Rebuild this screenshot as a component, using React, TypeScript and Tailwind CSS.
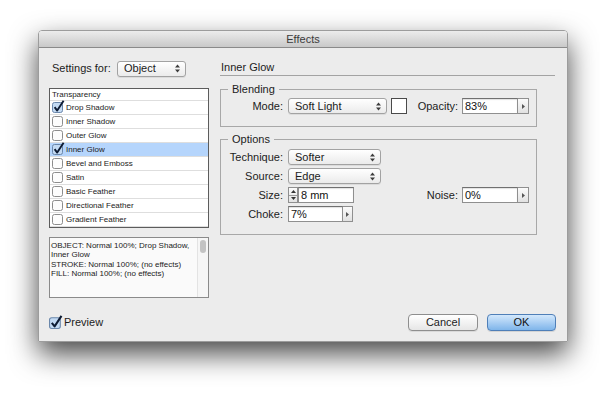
import React from "react";

const effects = [
  { name: "Drop Shadow", checked: true },
  { name: "Inner Shadow", checked: false },
  { name: "Outer Glow", checked: false },
  { name: "Inner Glow", checked: true, selected: true },
  { name: "Bevel and Emboss", checked: false },
  { name: "Satin", checked: false },
  { name: "Basic Feather", checked: false },
  { name: "Directional Feather", checked: false },
  { name: "Gradient Feather", checked: false },
];

function CheckBox({ checked, size = 13 }: { checked: boolean; size?: number }) {
  return (
    <svg width={size} height={size} viewBox="0 0 13 13" className="shrink-0 overflow-visible">
      <rect
        x="0.5"
        y="2.5"
        width="10"
        height="10"
        rx="2"
        fill={checked ? "#c3daf3" : "#fdfdfd"}
        stroke={checked ? "#6a87ab" : "#8d8d8d"}
      />
      {checked && (
        <path d="M2.6 7.2 L5.2 10.6 L11.6 0.8" fill="none" stroke="#0d1b33" strokeWidth="1.9" strokeLinejoin="round" />
      )}
    </svg>
  );
}

function UpDown() {
  return (
    <svg width="5" height="9" viewBox="0 0 5 9" className="shrink-0">
      <path d="M0 3.5 L2.5 0.5 L5 3.5 Z" fill="#3c3c3c" />
      <path d="M0 5.5 L2.5 8.5 L5 5.5 Z" fill="#3c3c3c" />
    </svg>
  );
}

function Select({ value, w }: { value: string; w: string }) {
  return (
    <div
      className={`${w} h-[16px] shrink-0 rounded-[3px] border border-[#a2a2a2] bg-linear-to-b from-white to-[#ebebeb] shadow-[0_1px_0_rgba(0,0,0,0.07)] flex items-center justify-between pl-[6px] pr-[5px] text-[11px] text-[#1c1c1c]`}
    >
      <span>{value}</span>
      <UpDown />
    </div>
  );
}

function ArrowBtn({ w }: { w: string }) {
  return (
    <div className={`${w} h-[16px] border border-l-0 border-[#8f8f8f] bg-linear-to-b from-[#fbfbfb] to-[#e1e1e1] flex items-center justify-center`}>
      <svg width="3" height="5" viewBox="0 0 3 5">
        <path d="M0 0 L3 2.5 L0 5 Z" fill="#555" />
      </svg>
    </div>
  );
}

function Field({ value, w, arrow }: { value: string; w: string; arrow?: string }) {
  return (
    <div className="flex shrink-0">
      <div className={`${w} h-[16px] border border-[#8f8f8f] border-t-[#707070] bg-white pl-[2px] text-[11px] leading-[14px] text-[#111] shadow-[inset_0_1px_1px_rgba(0,0,0,0.12)]`}>
        {value}
      </div>
      {arrow && <ArrowBtn w={arrow} />}
    </div>
  );
}

function Label({ children, w = "w-[62px]" }: { children: React.ReactNode; w?: string }) {
  return <div className={`${w} shrink-0 text-right text-[11px] text-[#1c1c1c]`}>{children}</div>;
}

export default function App() {
  return (
    <div className="w-[600px] h-[394px] bg-white overflow-hidden font-['Liberation_Sans',Arial,sans-serif]">
      <div className="ml-[38px] mt-[30px] w-[530px] h-[312px] flex flex-col rounded-t-[4px] border border-[#9c9c9c] overflow-hidden shadow-[0_12px_28px_rgba(0,0,0,0.72)]">
        {/* title bar */}
        <div className="h-[17px] shrink-0 flex items-center justify-center border-b border-[#8a8a8a] bg-linear-to-b from-[#ececec] to-[#c9c9c9] text-[11px] text-[#3b3b3b]">
          Effects
        </div>

        <div className="flex-1 bg-[#ececec] flex flex-col pl-[10px] pr-[11px]">
          <div className="flex">
            {/* left column */}
            <div className="w-[160px] shrink-0 flex flex-col">
              <div className="mt-[12px] h-[17px] flex items-center">
                <div className="ml-[3px] w-[59px] text-[11px] text-[#1c1c1c]">Settings for:</div>
                <div className="ml-[6px]">
                  <Select value="Object" w="w-[69px]" />
                </div>
              </div>

              <div className="mt-[11px] h-[140px] border border-[#5c5c5c] bg-white overflow-hidden flex flex-col">
                <div className="h-[12px] shrink-0 border-b border-[#dedede] flex items-center pl-[2px] text-[8px] text-[#222]">
                  Transparency
                </div>
                {effects.map((e) => (
                  <div
                    key={e.name}
                    className={`h-[14px] shrink-0 border-b border-[#dedede] flex items-center pl-[2px] text-[8px] text-[#222] ${
                      e.selected ? "bg-[#b5d5fc]" : "bg-white"
                    }`}
                  >
                    <div className="-mt-[2px]">
                      <CheckBox checked={e.checked} />
                    </div>
                    <span className="ml-[1px]">{e.name}</span>
                  </div>
                ))}
              </div>

              <div className="mt-[9px] h-[61px] border border-[#8a8a8a] bg-[#fafafa] flex">
                <div className="flex-1 pl-[1px] pt-[3px] text-[8px] leading-[9.3px] text-[#222] whitespace-nowrap">
                  <div>OBJECT: Normal 100%; Drop Shadow,</div>
                  <div>Inner Glow</div>
                  <div>STROKE: Normal 100%; (no effects)</div>
                  <div>FILL: Normal 100%; (no effects)</div>
                </div>
                <div className="w-[11px] shrink-0 border-l border-[#e3e3e3] bg-[#f6f6f6] pt-[2px] flex justify-center">
                  <div className="w-[6px] h-[13px] rounded-full bg-[#c3c3c3]" />
                </div>
              </div>
            </div>

            {/* right column */}
            <div className="ml-[11px] w-[335px] flex flex-col">
              <div className="mt-[12px] h-[16px] flex items-center border-b border-[#a3a3a3] pl-[1px] text-[11px] text-[#1c1c1c]">
                Inner Glow
              </div>

              <fieldset className="mt-[7px] w-[317px] border border-[#a8a8a8] pb-[12px]">
                <legend className="ml-[7px] px-[4px] text-[11px] leading-[13px] text-[#1c1c1c]">Blending</legend>
                <div className="mt-[2px] h-[16px] flex items-center">
                  <Label>Mode:</Label>
                  <div className="ml-[5px]">
                    <Select value="Soft Light" w="w-[99px]" />
                  </div>
                  <div className="ml-[4px] w-[16px] h-[16px] border border-[#4a4a4a] bg-white" />
                  <Label w="w-[51px]">Opacity:</Label>
                  <div className="ml-[4px]">
                    <Field value="83%" w="w-[56px]" arrow="w-[11px]" />
                  </div>
                </div>
              </fieldset>

              <fieldset className="mt-[6px] w-[317px] border border-[#a8a8a8] pb-[12px]">
                <legend className="ml-[7px] px-[4px] text-[11px] leading-[13px] text-[#1c1c1c]">Options</legend>
                <div className="mt-[3px] flex flex-col gap-[3px]">
                  <div className="h-[16px] flex items-center">
                    <Label>Technique:</Label>
                    <div className="ml-[5px]">
                      <Select value="Softer" w="w-[93px]" />
                    </div>
                  </div>
                  <div className="h-[16px] flex items-center">
                    <Label>Source:</Label>
                    <div className="ml-[5px]">
                      <Select value="Edge" w="w-[93px]" />
                    </div>
                  </div>
                  <div className="h-[16px] flex items-center">
                    <Label>Size:</Label>
                    <div className="ml-[5px] w-[10px] h-[16px] border border-[#8f8f8f] bg-linear-to-b from-[#fbfbfb] to-[#e3e3e3] flex flex-col">
                      <div className="flex-1 flex items-center justify-center border-b border-[#9a9a9a]">
                        <svg width="5" height="3" viewBox="0 0 5 3">
                          <path d="M0 3 L2.5 0 L5 3 Z" fill="#333" />
                        </svg>
                      </div>
                      <div className="flex-1 flex items-center justify-center">
                        <svg width="5" height="3" viewBox="0 0 5 3">
                          <path d="M0 0 L2.5 3 L5 0 Z" fill="#333" />
                        </svg>
                      </div>
                    </div>
                    <Field value="8 mm" w="w-[56px]" />
                    <Label w="w-[104px]">Noise:</Label>
                    <div className="ml-[4px]">
                      <Field value="0%" w="w-[56px]" arrow="w-[11px]" />
                    </div>
                  </div>
                  <div className="h-[16px] flex items-center">
                    <Label>Choke:</Label>
                    <div className="ml-[5px]">
                      <Field value="7%" w="w-[55px]" arrow="w-[10px]" />
                    </div>
                  </div>
                </div>
              </fieldset>
            </div>
          </div>

          {/* bottom row */}
          <div className="mt-[16px] h-[17px] flex items-center justify-between">
            <div className="flex items-center">
              <div className="-mt-[2px]">
                <CheckBox checked size={14} />
              </div>
              <span className="ml-[1px] text-[11px] text-[#1c1c1c]">Preview</span>
            </div>
            <div className="flex gap-[9px]">
              <div className="w-[70px] h-[17px] rounded-[4px] border border-[#8e8e8e] bg-linear-to-b from-white to-[#e6e6e6] flex items-center justify-center text-[11px] text-[#1c1c1c] shadow-[0_1px_0_rgba(0,0,0,0.08)]">
                Cancel
              </div>
              <div className="w-[69px] h-[17px] rounded-[4px] border border-[#4f7fb8] bg-linear-to-b from-[#d3e8fc] to-[#7fb5ea] flex items-center justify-center text-[11px] text-[#111] shadow-[0_1px_0_rgba(0,0,0,0.1)]">
                OK
              </div>
            </div>
          </div>
        </div>
      </div>
    </div>
  );
}
